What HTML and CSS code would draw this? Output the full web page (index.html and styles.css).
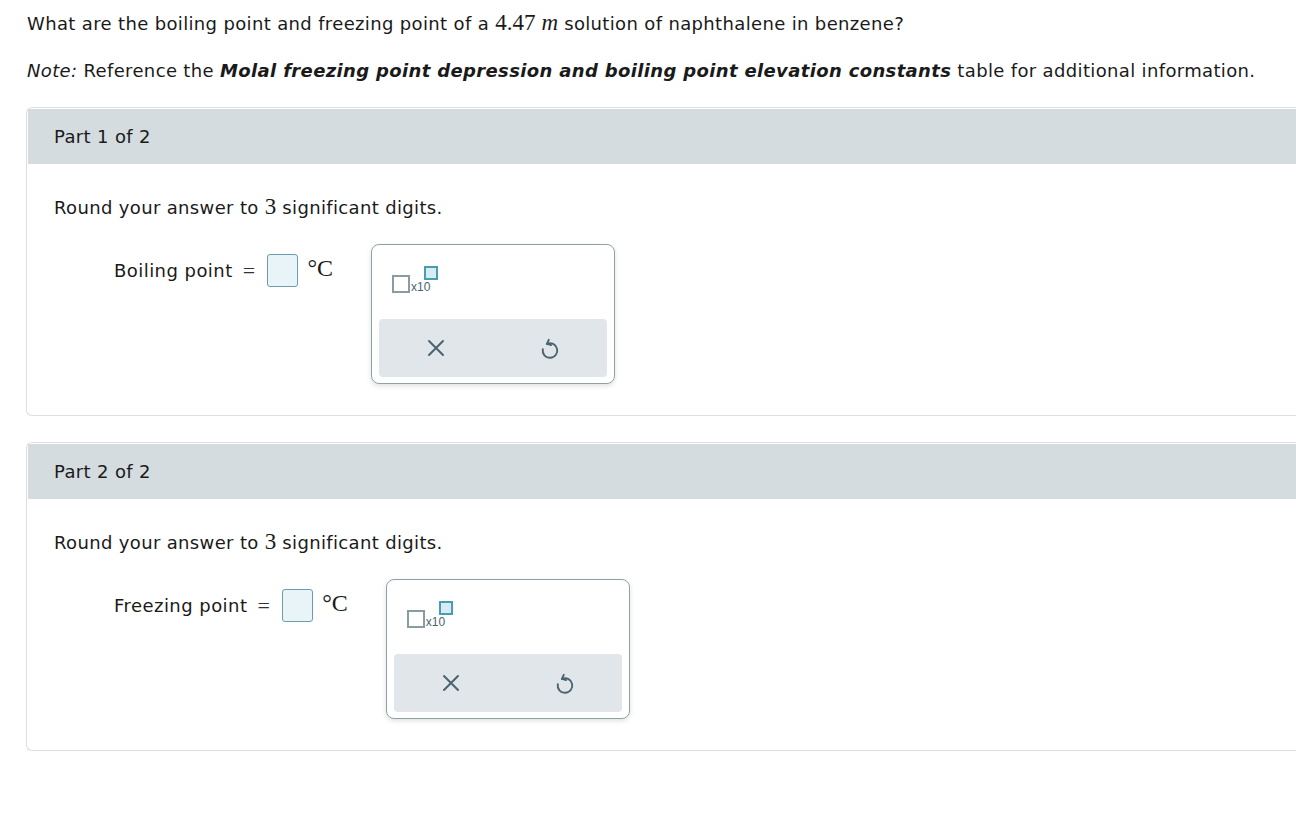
FILE: index.html
```html
<!DOCTYPE html>
<html>
<head>
<meta charset="utf-8">
<link rel="stylesheet" href="styles.css">
</head>
<body>
<div class="page">
  <p class="question">What are the boiling point and freezing point of a <span class="num">4.47</span> <span class="var">m</span> solution of naphthalene in benzene?</p>
  <p class="note"><em>Note:</em> Reference the <strong><em>Molal freezing point depression and boiling point elevation constants</em></strong> table for additional information.</p>

  <section class="card">
    <div class="card-head">Part 1 of 2</div>
    <div class="card-body">
      <p class="instr">Round your answer to <span class="num">3</span> significant digits.</p>
      <div class="answer-row">
        <div class="eq">
          <span class="label">Boiling point</span>
          <span class="equals">=</span>
          <span class="input"></span>
          <span class="unit">°C</span>
        </div>
        <div class="toolbox">
          <div class="tool-top">
            <span class="sci">
              <span class="sci-base"></span><span class="sci-x">x10</span><span class="sci-exp"></span>
            </span>
          </div>
          <div class="tool-actions">
            <span class="act">
              <svg width="18" height="18" viewBox="0 0 18 18"><path d="M2 2 L16 16 M16 2 L2 16" stroke="#4a6470" stroke-width="2" fill="none" stroke-linecap="round"/></svg>
            </span>
            <span class="act">
              <svg width="20" height="22" viewBox="0 0 20 22"><path d="M2.8 12.2 A7.3 7.3 0 1 0 6.9 6.9" stroke="#4a6470" stroke-width="1.9" fill="none" stroke-linecap="round"/><path d="M8.8 2.8 L6.9 6.9 L11.2 8.1" stroke="#4a6470" stroke-width="1.9" fill="none" stroke-linecap="round" stroke-linejoin="round"/></svg>
            </span>
          </div>
        </div>
      </div>
    </div>
  </section>

  <section class="card">
    <div class="card-head">Part 2 of 2</div>
    <div class="card-body">
      <p class="instr">Round your answer to <span class="num">3</span> significant digits.</p>
      <div class="answer-row">
        <div class="eq">
          <span class="label">Freezing point</span>
          <span class="equals">=</span>
          <span class="input"></span>
          <span class="unit">°C</span>
        </div>
        <div class="toolbox">
          <div class="tool-top">
            <span class="sci">
              <span class="sci-base"></span><span class="sci-x">x10</span><span class="sci-exp"></span>
            </span>
          </div>
          <div class="tool-actions">
            <span class="act">
              <svg width="18" height="18" viewBox="0 0 18 18"><path d="M2 2 L16 16 M16 2 L2 16" stroke="#4a6470" stroke-width="2" fill="none" stroke-linecap="round"/></svg>
            </span>
            <span class="act">
              <svg width="20" height="22" viewBox="0 0 20 22"><path d="M2.8 12.2 A7.3 7.3 0 1 0 6.9 6.9" stroke="#4a6470" stroke-width="1.9" fill="none" stroke-linecap="round"/><path d="M8.8 2.8 L6.9 6.9 L11.2 8.1" stroke="#4a6470" stroke-width="1.9" fill="none" stroke-linecap="round" stroke-linejoin="round"/></svg>
            </span>
          </div>
        </div>
      </div>
    </div>
  </section>
</div>
</body>
</html>
```

FILE: styles.css
```css
html, body {
  margin: 0;
  padding: 0;
  overflow: hidden;
  background: #ffffff;
}
body {
  font-family: "DejaVu Sans", Verdana, sans-serif;
  font-size: 18px;
  letter-spacing: 0.35px;
  color: #1a1a1a;
}
.page {
  padding: 12px 0 0 27px;
  width: 1300px;
}
.question, .note {
  margin: 0;
  line-height: 22px;
}
.note {
  margin-top: 25px;
}
.note strong {
  font-weight: bold;
}
.num {
  font-family: "Liberation Serif", "Times New Roman", serif;
  font-size: 23px;
  letter-spacing: 0;
}
.var {
  font-family: "Liberation Serif", "Times New Roman", serif;
  font-style: italic;
  font-size: 23px;
  letter-spacing: 0;
}
.card {
  margin-top: 25px;
  margin-left: -1px;
  border: 1px solid #dadfe2;
  border-right: none;
  border-radius: 6px 0 0 6px;
  padding: 1px 0 0 1px;
}
.card + .card {
  margin-top: 26px;
}
.card-head {
  background: #d4dce0;
  height: 55px;
  line-height: 55px;
  padding-left: 26px;
}
.card-body {
  padding: 30px 0 31px 26px;
}
.instr {
  margin: 0;
  line-height: 26px;
}
.answer-row {
  display: flex;
  align-items: flex-start;
  margin-top: 23px;
  margin-left: 60px;
}
.eq {
  display: flex;
  align-items: center;
  margin-top: 10px;
}
.label {
  letter-spacing: 0.45px;
}
.equals {
  font-family: "Liberation Serif", "Times New Roman", serif;
  font-size: 22px;
  margin-left: 10px;
  color: #333;
}
.input {
  display: inline-block;
  width: 29px;
  height: 31px;
  margin-left: 12px;
  background: #e8f4f8;
  border: 1.5px solid #6b9eac;
  border-radius: 3px;
}
.unit {
  font-family: "Liberation Serif", "Times New Roman", serif;
  font-size: 24px;
  letter-spacing: 0;
  margin-left: 9px;
  align-self: flex-start;
  margin-top: 1px;
}
.toolbox {
  margin-left: 38px;
  width: 228px;
  border: 1px solid #8fa0a6;
  border-radius: 8px;
  box-shadow: 0 2px 5px rgba(0,0,0,0.12);
  display: flex;
  flex-direction: column;
  padding: 0 7px 6px 7px;
}
.tool-top {
  height: 74px;
  position: relative;
}
.sci {
  position: absolute;
  left: 13px;
  top: 21px;
  width: 50px;
  height: 30px;
}
.sci-base {
  position: absolute;
  left: 0;
  top: 9px;
  width: 14px;
  height: 14px;
  border: 2px solid #8a9ca2;
  background: #fff;
}
.sci-x {
  position: absolute;
  left: 19px;
  top: 14px;
  font-family: "Liberation Sans", Arial, sans-serif;
  font-size: 12px;
  letter-spacing: 0;
  color: #4a6470;
}
.sci-exp {
  position: absolute;
  left: 32px;
  top: 0;
  width: 10px;
  height: 10px;
  border: 2px solid #4a9cb4;
  background: #d6ecf3;
}
.tool-actions {
  height: 58px;
  background: #e0e6e9;
  border-radius: 4px;
  display: flex;
  align-items: center;
}
.act {
  flex: 1;
  display: flex;
  justify-content: center;
  align-items: center;
}
```
